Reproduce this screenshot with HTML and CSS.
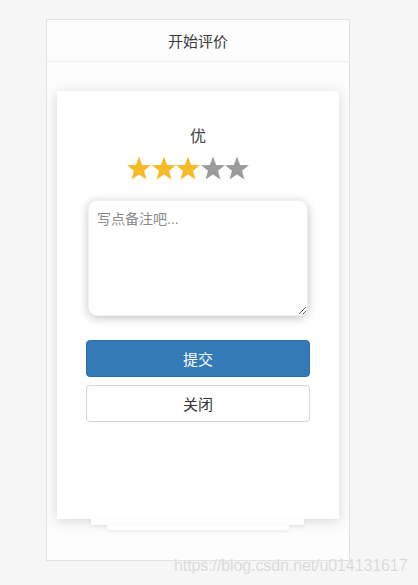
FILE: index.html
```html
<!DOCTYPE html>
<html lang="zh">
<head>
<meta charset="utf-8">
<link rel="stylesheet" href="styles.css">
</head>
<body>
<div class="frame">
  <div class="header">开始评价</div>
  <div class="card">
    <div class="grade">优</div>
    <div class="stars">
      <svg class="star on" viewBox="0 0 24 24"><path d="M12 .6L15.12 8.91 23.98 9.31 17.04 14.84 19.41 23.39 12 18.5 4.59 23.39 6.96 14.84 .02 9.31 8.88 8.91Z"/></svg>
      <svg class="star on" viewBox="0 0 24 24"><path d="M12 .6L15.12 8.91 23.98 9.31 17.04 14.84 19.41 23.39 12 18.5 4.59 23.39 6.96 14.84 .02 9.31 8.88 8.91Z"/></svg>
      <svg class="star on" viewBox="0 0 24 24"><path d="M12 .6L15.12 8.91 23.98 9.31 17.04 14.84 19.41 23.39 12 18.5 4.59 23.39 6.96 14.84 .02 9.31 8.88 8.91Z"/></svg>
      <svg class="star off" viewBox="0 0 24 24"><path d="M12 .6L15.12 8.91 23.98 9.31 17.04 14.84 19.41 23.39 12 18.5 4.59 23.39 6.96 14.84 .02 9.31 8.88 8.91Z"/></svg>
      <svg class="star off" viewBox="0 0 24 24"><path d="M12 .6L15.12 8.91 23.98 9.31 17.04 14.84 19.41 23.39 12 18.5 4.59 23.39 6.96 14.84 .02 9.31 8.88 8.91Z"/></svg>
    </div>
    <textarea class="note" placeholder="写点备注吧..."></textarea>
    <button class="btn btn-primary">提交</button>
    <button class="btn btn-default">关闭</button>
  </div>
  <div class="stack stack1"></div>
  <div class="stack stack2"></div>
</div>
<div class="watermark">https://blog.csdn.net/u014131617</div>
</body>
</html>
```
FILE: styles.css
```css
html, body {
  margin: 0;
  padding: 0;
  background: #f6f6f6;
  font-family: "Liberation Sans", "Noto Sans CJK SC", sans-serif;
  color: #333;
}
.frame {
  margin: 19px 0 0 46px;
  width: 302px;
  height: 540px;
  border: 1px solid #e2e2e2;
  background: #fdfdfd;
  display: flex;
  flex-direction: column;
}
.header {
  height: 41px;
  border-bottom: 1px solid #efefef;
  display: flex;
  align-items: center;
  justify-content: center;
  font-size: 15px;
  color: #3a3a3a;
}
.card {
  margin: 29px 0 0 10px;
  width: 282px;
  height: 428px;
  box-sizing: border-box;
  background: #fff;
  box-shadow: 0 2px 12px rgba(0,0,0,0.16);
  display: flex;
  flex-direction: column;
  align-items: center;
  padding-top: 35px;
}
.grade {
  font-size: 16px;
  line-height: 22px;
  color: #444;
}
.stars {
  margin-top: 8px;
  margin-right: 20px;
  display: flex;
  gap: 0.5px;
  height: 24px;
}
.star {
  width: 24px;
  height: 24px;
}
.star.on { fill: #f7b925; }
.star.off { fill: #9b9b9b; }
.note {
  margin-top: 20px;
  width: 220px;
  height: 116px;
  box-sizing: border-box;
  border: 1px solid #f0f0f0;
  border-radius: 9px;
  box-shadow: 0 2px 10px rgba(0,0,0,0.24);
  padding: 8px 8px;
  font-family: "Liberation Sans", "Noto Sans CJK SC", sans-serif;
  font-size: 14px;
  line-height: 20px;
  outline: none;
  background: #fff;
}
.note::placeholder {
  color: #8a8a8a;
}
.btn {
  width: 224px;
  height: 37px;
  border-radius: 4px;
  font-family: "Liberation Sans", "Noto Sans CJK SC", sans-serif;
  font-size: 15px;
  padding: 0;
  cursor: pointer;
}
.btn-primary {
  margin-top: 24px;
  background: #337ab7;
  border: 1px solid #2e6da4;
  color: #fff;
}
.btn-default {
  margin-top: 8px;
  background: #fff;
  border: 1px solid #d4d4d4;
  color: #333;
}
.stack {
  background: #fff;
  box-shadow: 0 1px 4px rgba(0,0,0,0.08);
}
.stack1 {
  margin-left: 44px;
  width: 213px;
  height: 6px;
}
.stack2 {
  margin-left: 60px;
  width: 182px;
  height: 5px;
}
.watermark {
  position: absolute;
  left: 174px;
  top: 557px;
  font-family: "Liberation Sans", sans-serif;
  font-size: 16px;
  color: #d9d9d9;
  text-shadow: 0 0 1px #fff;
  letter-spacing: -0.1px;
}
```
